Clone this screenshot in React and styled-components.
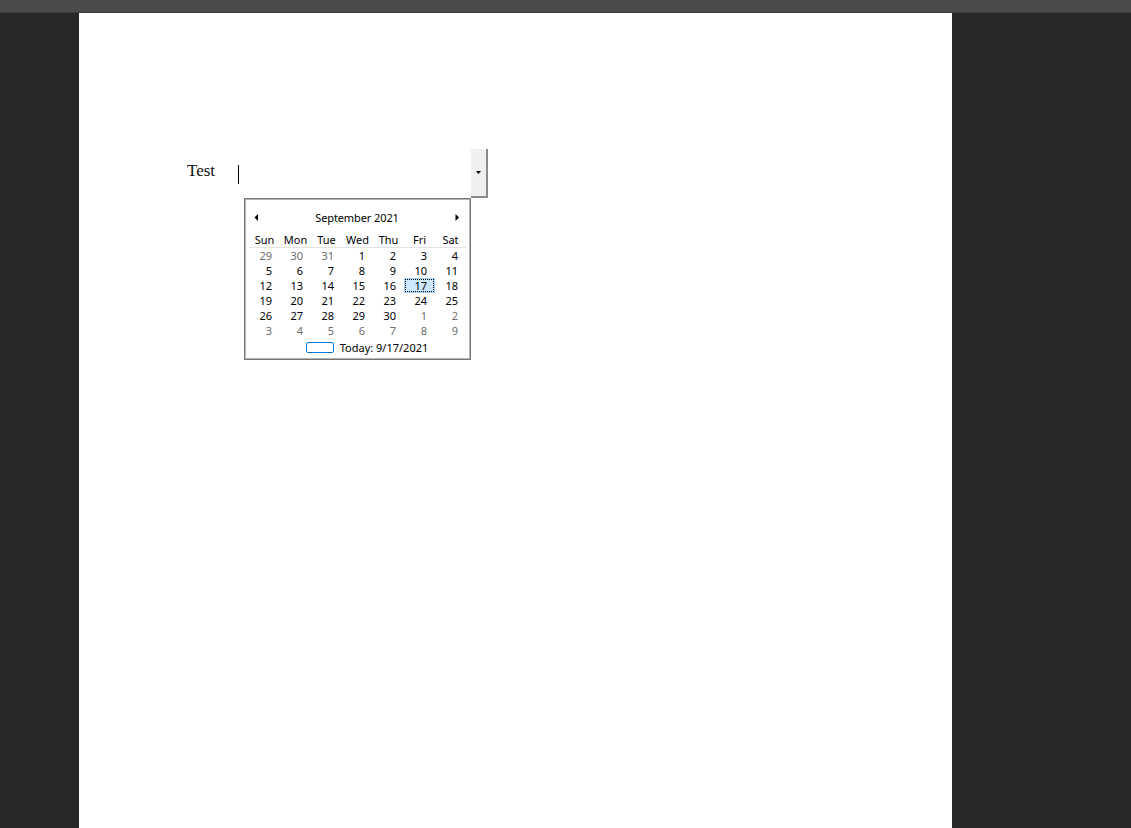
import React from "react";
import styled, { createGlobalStyle } from "styled-components";

const Global = createGlobalStyle`
  html, body { margin: 0; padding: 0; height: 100%; }
  body { background: #282828; overflow: hidden; }
  #root { height: 100%; }
`;

const Shell = styled.div`
  display: flex;
  flex-direction: column;
  width: 1131px;
  height: 828px;
`;

const TopBar = styled.div`
  height: 12px;
  background: #4b4b4b;
  border-bottom: 1px solid #3c3c3c;
  flex: none;
`;

const Stage = styled.div`
  flex: 1;
  display: flex;
  padding-left: 79px;
  background: #282828;
`;

const Page = styled.div`
  width: 873px;
  background: #ffffff;
  padding: 136px 0 0 108px;
  box-sizing: border-box;
`;

const FieldRow = styled.div`
  display: flex;
  align-items: flex-start;
  height: 49px;
`;

const Label = styled.div`
  font-family: "Liberation Serif", "Times New Roman", serif;
  font-size: 17px;
  color: #111;
  width: 51px;
  padding-top: 12px;
  line-height: 20px;
`;

const InputWrap = styled.div`
  position: relative;
  display: flex;
  width: 250px;
  height: 49px;
`;

const TextArea = styled.div`
  flex: 1;
  display: flex;
  align-items: flex-start;
  padding-top: 16px;
`;

const Caret = styled.div`
  width: 1px;
  height: 19px;
  background: #000;
`;

const DropButton = styled.div`
  width: 15px;
  height: 47px;
  background: #f0f0f0;
  border-right: 2px solid #8a8a8a;
  border-bottom: 2px solid #8a8a8a;
  display: flex;
  align-items: center;
  justify-content: center;
`;

const Popup = styled.div`
  position: absolute;
  left: 6px;
  top: 49px;
  width: 227px;
  height: 162px;
  box-sizing: border-box;
  background: #fff;
  border: 1px solid #777;
  box-shadow: inset 0 0 0 1px #b4b4b4;
  font-family: "Noto Sans", "Segoe UI", sans-serif;
  font-size: 11px;
  color: #000;
  padding: 7px 5px 0 4px;
  display: flex;
  flex-direction: column;
`;

const MonthBar = styled.div`
  display: flex;
  align-items: center;
  justify-content: space-between;
  height: 22px;
  padding: 0 5px 0 5px;
`;

const MonthTitle = styled.div`
  letter-spacing: -0.1px;
`;

const Grid = styled.div`
  display: grid;
  grid-template-columns: repeat(7, 31px);
  margin-top: 4px;
`;

const DayName = styled.div`
  text-align: center;
  height: 15px;
  line-height: 15px;
  border-bottom: 1px solid #e3e3e3;
`;

const DateCell = styled.div`
  height: 15px;
  line-height: 15px;
  text-align: right;
  padding-right: 8px;
  color: ${(p) => (p.$other ? "#6d6d6d" : "#000")};
  position: relative;
`;

const Selected = styled.span`
  position: absolute;
  left: 0px;
  right: 0px;
  top: 0px;
  bottom: 0px;
  background: #cce8ff;
  border: 1px solid #99d1ff;
  outline: 1px dotted #000;
  outline-offset: -2px;
  z-index: 0;
`;

const Num = styled.span`
  position: relative;
  z-index: 1;
`;

const TodayRow = styled.div`
  display: flex;
  align-items: center;
  justify-content: center;
  gap: 6px;
  height: 18px;
  padding-left: 20px;
`;

const TodayBox = styled.span`
  width: 26px;
  height: 9px;
  border: 1px solid #0078d7;
  border-radius: 2px;
`;

const Tri = ({ dir }) => (
  <svg width="5" height="7" viewBox="0 0 5 7">
    {dir === "left" ? (
      <polygon points="4,0 4,7 0.5,3.5" fill="#000" />
    ) : (
      <polygon points="0.5,0 0.5,7 4,3.5" fill="#000" />
    )}
  </svg>
);

const days = ["Sun", "Mon", "Tue", "Wed", "Thu", "Fri", "Sat"];
const rows = [
  [29, 30, 31, 1, 2, 3, 4],
  [5, 6, 7, 8, 9, 10, 11],
  [12, 13, 14, 15, 16, 17, 18],
  [19, 20, 21, 22, 23, 24, 25],
  [26, 27, 28, 29, 30, 1, 2],
  [3, 4, 5, 6, 7, 8, 9],
];

export default function App() {
  return (
    <>
      <Global />
      <Shell>
        <TopBar />
        <Stage>
          <Page>
            <FieldRow>
              <Label>Test</Label>
              <InputWrap>
                <TextArea>
                  <Caret />
                </TextArea>
                <DropButton>
                  <svg width="5" height="3" viewBox="0 0 5 3">
                    <polygon points="0,0 5,0 2.5,3" fill="#000" />
                  </svg>
                </DropButton>
                <Popup>
                  <MonthBar>
                    <Tri dir="left" />
                    <MonthTitle>September 2021</MonthTitle>
                    <Tri dir="right" />
                  </MonthBar>
                  <Grid>
                    {days.map((d) => (
                      <DayName key={d}>{d}</DayName>
                    ))}
                    {rows.map((r, ri) =>
                      r.map((n, ci) => {
                        const other = (ri === 0 && n > 20) || (ri >= 4 && n < 15);
                        const sel = ri === 2 && n === 17;
                        return (
                          <DateCell key={`${ri}-${ci}`} $other={other}>
                            {sel && <Selected />}
                            <Num>{n}</Num>
                          </DateCell>
                        );
                      })
                    )}
                  </Grid>
                  <TodayRow>
                    <TodayBox />
                    <span>Today: 9/17/2021</span>
                  </TodayRow>
                </Popup>
              </InputWrap>
            </FieldRow>
          </Page>
        </Stage>
      </Shell>
    </>
  );
}
